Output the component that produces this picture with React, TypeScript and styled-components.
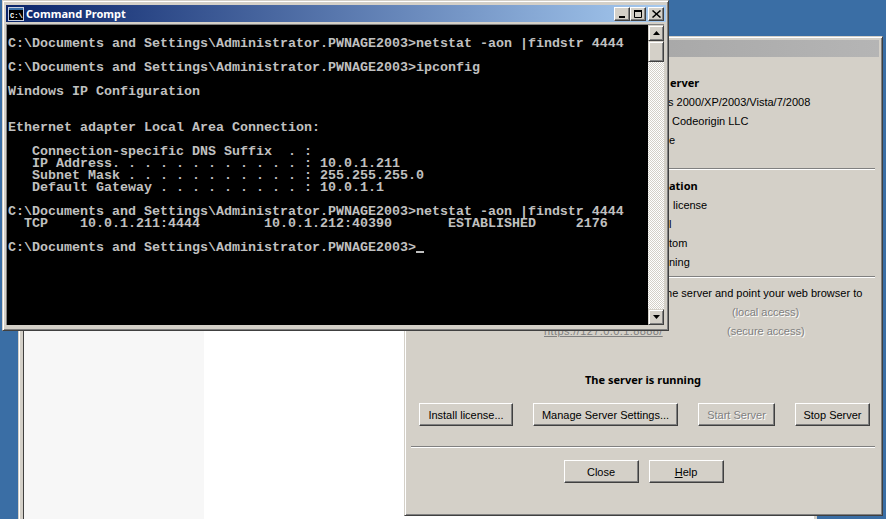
import React from "react";
import styled, { createGlobalStyle } from "styled-components";

const Global = createGlobalStyle`
  html, body { margin: 0; padding: 0; background: #3a6ea5; overflow: hidden; }
  #root { width: 886px; height: 519px; }
`;

const Desktop = styled.div`
  position: relative;
  width: 886px;
  height: 519px;
  overflow: hidden;
  background: #3a6ea5;
`;

const BackWindow = styled.div`
  position: absolute;
  left: 18px;
  top: 300px;
  width: 799px;
  height: 240px;
  box-sizing: border-box;
  display: flex;
  background: #d4d0c8;
  border-left: 1px solid #d4d0c8;
  padding: 0 3px 0 4px;
  box-shadow: inset 1px 0 0 #fff;
`;

const BackSide = styled.div`
  width: 180px;
  background: #f7f7f7;
  border-left: 1px solid #404040;
`;

const BackMain = styled.div`
  flex: 1;
  background: #fff;
`;

const ServerWindow = styled.div`
  position: absolute;
  left: 404px;
  top: 36px;
  width: 479px;
  height: 480px;
  box-sizing: border-box;
  display: flex;
  flex-direction: column;
  background: #d4d0c8;
  border: 1px solid;
  border-color: #d4d0c8 #404040 #404040 #d4d0c8;
  box-shadow: inset 1px 1px 0 #fff, inset -1px -1px 0 #808080;
  padding: 3px;
  font: 11px "Liberation Sans", "Noto Sans", sans-serif;
  color: #000;
`;

const InactiveTitle = styled.div`
  height: 17px;
  flex: none;
  background: linear-gradient(90deg, #9a9a9a, #b5b5b5);
`;

const ServerBody = styled.div`
  flex: 1;
  display: flex;
  flex-direction: column;
  padding: 0 4px 0 3px;
`;

const InfoRows = styled.div`
  display: flex;
  flex-direction: column;
  padding-top: 16px;
`;

const Row = styled.div<{ $indent: number; $bold?: boolean }>`
  height: 19px;
  line-height: ${(p) => (p.$bold ? 19 : 21)}px;
  white-space: nowrap;
  padding-left: ${(p) => p.$indent}px;
  font-family: ${(p) => (p.$bold ? '"Noto Sans", sans-serif' : "inherit")};
  font-weight: ${(p) => (p.$bold ? 700 : 400)};
`;

const AccessRow = styled.div`
  height: 19px;
  line-height: 21px;
  display: flex;
  white-space: nowrap;
`;

const AccessLink = styled.span`
  margin-left: 133px;
  width: 183px;
  color: #808080;
  letter-spacing: 0.4px;
  text-decoration: underline;
`;

const AccessNote = styled.span<{ $offset: number }>`
  margin-left: ${(p) => p.$offset}px;
  color: #808080;
  text-shadow: 1px 1px 0 #fff;
`;

const Rule = styled.div<{ $top: number; $bottom: number }>`
  height: 2px;
  flex: none;
  margin: ${(p) => p.$top}px 0 ${(p) => p.$bottom}px;
  background: linear-gradient(#808080 50%, #fff 50%);
`;

const Status = styled.div`
  margin-top: 30px;
  height: 19px;
  text-align: center;
  font: 700 11px/19px "Noto Sans", sans-serif;
`;

const ActionRow = styled.div`
  display: flex;
  gap: 20px;
  padding-left: 8px;
  margin-top: 14px;
`;

const FooterRow = styled.div`
  display: flex;
  justify-content: center;
  gap: 10px;
  margin-left: 1px;
`;

const Button = styled.div<{ $w: number; $disabled?: boolean }>`
  width: ${(p) => p.$w}px;
  height: 23px;
  box-sizing: border-box;
  padding-top: 1px;
  display: flex;
  align-items: center;
  justify-content: center;
  background: #d4d0c8;
  border: 1px solid;
  border-color: #fff #404040 #404040 #fff;
  box-shadow: inset -1px -1px 0 #808080;
  color: ${(p) => (p.$disabled ? "#808080" : "#000")};
  text-shadow: ${(p) => (p.$disabled ? "1px 1px 0 #fff" : "none")};
`;

const ConsoleWindow = styled.div`
  position: absolute;
  left: 2px;
  top: 0;
  width: 667px;
  height: 331px;
  box-sizing: border-box;
  display: flex;
  flex-direction: column;
  background: #d4d0c8;
  border: 1px solid;
  border-color: #d4d0c8 #404040 #404040 #d4d0c8;
  box-shadow: inset 1px 1px 0 #fff, inset -1px -1px 0 #808080;
  padding: 4px 4px 5px 3px;
`;

const TitleBar = styled.div`
  height: 17px;
  flex: none;
  margin-right: -2px;
  display: flex;
  align-items: center;
  gap: 2px;
  padding: 0 2px;
  background: linear-gradient(90deg, #0a246a, #a6caf0);
`;

const TitleText = styled.span`
  flex: 1;
  color: #fff;
  font: 700 11px "Noto Sans", "Liberation Sans", sans-serif;
`;

const AppIcon = styled.svg`
  width: 16px;
  height: 14px;
  flex: none;
`;

const CaptionButtons = styled.div`
  display: flex;
`;

const CaptionButton = styled.div<{ $gap?: number }>`
  width: 16px;
  height: 14px;
  box-sizing: border-box;
  margin-left: ${(p) => p.$gap ?? 0}px;
  display: flex;
  align-items: center;
  justify-content: center;
  background: #d4d0c8;
  border: 1px solid;
  border-color: #fff #404040 #404040 #fff;
  box-shadow: inset -1px -1px 0 #808080;
`;

const ConsoleFrame = styled.div`
  flex: 1;
  min-height: 0;
  margin-top: 2px;
  padding: 1px 0 0 1px;
  display: flex;
  box-shadow: inset 1px 1px 0 #808080;
`;

const Terminal = styled.pre`
  flex: 1;
  margin: 0;
  padding: 1px 0 0 1px;
  background: #000;
  color: #c0c0c0;
  font: 700 13.33px/12px "Liberation Mono", monospace;
  overflow: hidden;
`;

const Cursor = styled.span`
  display: inline-block;
  width: 8px;
  height: 2px;
  background: #c0c0c0;
  vertical-align: -2px;
`;

const Scrollbar = styled.div`
  width: 16px;
  flex: none;
  display: flex;
  flex-direction: column;
  background: repeating-conic-gradient(#d4d0c8 0% 25%, #fff 0% 50%) 0 0 / 2px 2px;
`;

const ScrollButton = styled.div<{ $h: number; $push?: boolean }>`
  height: ${(p) => p.$h}px;
  flex: none;
  box-sizing: border-box;
  margin-top: ${(p) => (p.$push ? "auto" : "0")};
  display: flex;
  align-items: center;
  justify-content: center;
  background: #d4d0c8;
  border: 1px solid;
  border-color: #d4d0c8 #404040 #404040 #d4d0c8;
  box-shadow: inset 1px 1px 0 #fff, inset -1px -1px 0 #808080;
`;

const TERMINAL_TEXT = `
C:\\Documents and Settings\\Administrator.PWNAGE2003>netstat -aon |findstr 4444

C:\\Documents and Settings\\Administrator.PWNAGE2003>ipconfig

Windows IP Configuration


Ethernet adapter Local Area Connection:

   Connection-specific DNS Suffix  . :
   IP Address. . . . . . . . . . . . : 10.0.1.211
   Subnet Mask . . . . . . . . . . . : 255.255.255.0
   Default Gateway . . . . . . . . . : 10.0.1.1

C:\\Documents and Settings\\Administrator.PWNAGE2003>netstat -aon |findstr 4444
  TCP    10.0.1.211:4444        10.0.1.212:40390       ESTABLISHED     2176

C:\\Documents and Settings\\Administrator.PWNAGE2003>`;

const Arrow = ({ up }: { up?: boolean }) => (
  <svg width="7" height="4" viewBox="0 0 7 4">
    <path d={up ? "M3.5 0 7 4H0z" : "M0 0h7L3.5 4z"} fill="#000" />
  </svg>
);

export default function App() {
  return (
    <Desktop>
      <Global />
      <BackWindow>
        <BackSide />
        <BackMain />
      </BackWindow>

      <ServerWindow>
        <InactiveTitle />
        <ServerBody>
          <InfoRows>
            <Row $indent={259} $bold>erver</Row>
            <Row $indent={257}>s 2000/XP/2003/Vista/7/2008</Row>
            <Row $indent={261}>Codeorigin LLC</Row>
            <Row $indent={258}>e</Row>
          </InfoRows>
          <Rule $top={19} $bottom={6} />
          <Row $indent={258} $bold>ation</Row>
          <Row $indent={262}>license</Row>
          <Row $indent={258}>l</Row>
          <Row $indent={258}>tom</Row>
          <Row $indent={258}>ning</Row>
          <Rule $top={5} $bottom={5} />
          <Row $indent={252}>the server and point your web browser to</Row>
          <AccessRow>
            <AccessNote $offset={321}>(local access)</AccessNote>
          </AccessRow>
          <AccessRow>
            <AccessLink>https://127.0.0.1:8888/</AccessLink>
            <AccessNote $offset={0}>(secure access)</AccessNote>
          </AccessRow>
          <Status>The server is running</Status>
          <ActionRow>
            <Button $w={94}>Install license...</Button>
            <Button $w={145}>Manage Server Settings...</Button>
            <Button $w={77} $disabled>Start Server</Button>
            <Button $w={75}>Stop Server</Button>
          </ActionRow>
          <Rule $top={20} $bottom={12} />
          <FooterRow>
            <Button $w={75}>Close</Button>
            <Button $w={75}><span><u>H</u>elp</span></Button>
          </FooterRow>
        </ServerBody>
      </ServerWindow>

      <ConsoleWindow>
        <TitleBar>
          <AppIcon viewBox="0 0 16 14">
            <rect x="0.5" y="0.5" width="15" height="13" fill="#000" stroke="#c8d0e0" />
            <rect x="1" y="1" width="14" height="2" fill="#3a6ea5" />
            <text x="2" y="10.5" fontSize="7" fontWeight="700" fontFamily="Liberation Mono" fill="#fff">C:\</text>
          </AppIcon>
          <TitleText>Command Prompt</TitleText>
          <CaptionButtons>
            <CaptionButton>
              <svg width="8" height="8" viewBox="0 0 8 8"><rect x="1" y="6" width="6" height="2" fill="#000" /></svg>
            </CaptionButton>
            <CaptionButton>
              <svg width="10" height="10" viewBox="0 0 10 10"><path d="M1.5 1.5h7v7h-7z" fill="none" stroke="#000" /><rect x="1" y="1" width="8" height="2" fill="#000" /></svg>
            </CaptionButton>
            <CaptionButton $gap={2}>
              <svg width="9" height="8" viewBox="0 0 9 8"><path d="M.5.5l8 7M8.5.5l-8 7" stroke="#000" strokeWidth="1.5" /></svg>
            </CaptionButton>
          </CaptionButtons>
        </TitleBar>
        <ConsoleFrame>
          <Terminal>{TERMINAL_TEXT}<Cursor /></Terminal>
          <Scrollbar>
            <ScrollButton $h={16}><Arrow up /></ScrollButton>
            <ScrollButton $h={21} />
            <ScrollButton $h={16} $push><Arrow /></ScrollButton>
          </Scrollbar>
        </ConsoleFrame>
      </ConsoleWindow>
    </Desktop>
  );
}
